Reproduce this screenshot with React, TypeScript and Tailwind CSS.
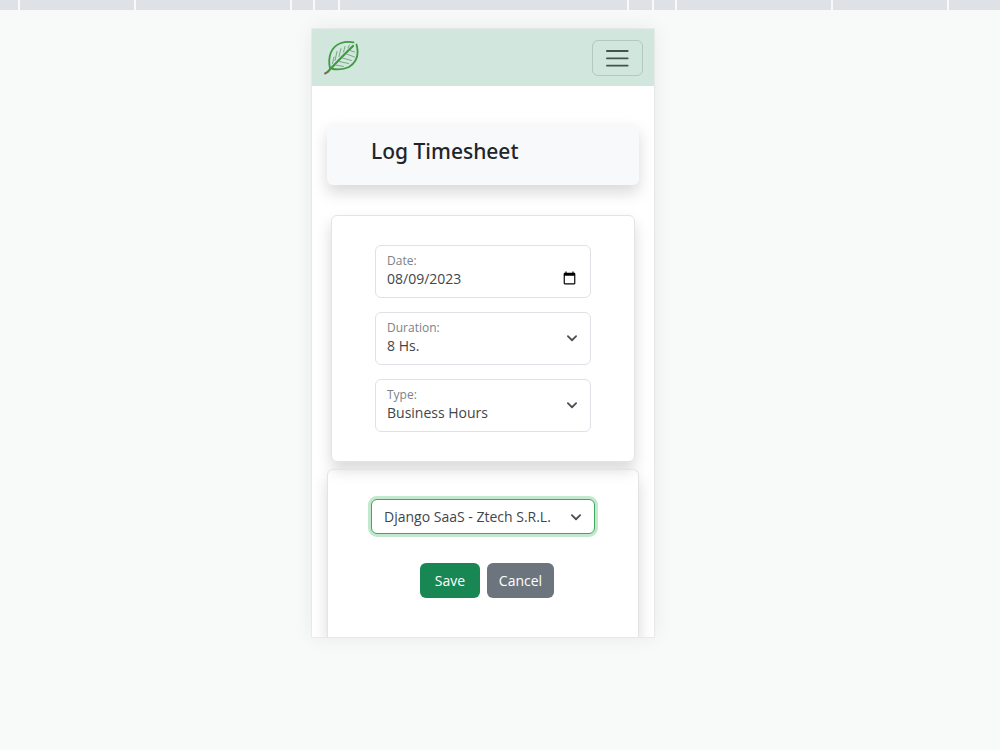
import { useState } from 'react';
import type { ReactNode } from 'react';
import { clsx } from 'clsx';

const DURATIONS = ['2 Hs.', '4 Hs.', '6 Hs.', '8 Hs.'];
const TYPES = ['Business Hours', 'Overtime', 'Holiday'];
const PROJECTS = ['Django SaaS - Ztech S.R.L.'];

function LeafLogo() {
  return (
    <svg viewBox="0 0 36 36" className="h-9 w-9" fill="none" strokeLinecap="round">
      <path d="M7 28.500C4.500 17 8 6.500 18 3c4.500-1.300 9-1.200 12.500-.6" stroke="#3f9a41" strokeWidth="1.800" />
      <path d="M33.500 4.500c2.500 9 .5 17.500-7.500 22.500-5 2.500-10.500 2.800-16.500 2" stroke="#3f9a41" strokeWidth="1.800" />
      <path d="M5.500 31C13 23 21 14.500 30 6" stroke="#3f9a41" strokeWidth="2.300" />
      <path
        d="M11 17 9.500 23.500M14 11.500 12 20.500M18 8.500 16 16.500M22 6.500 20.500 12M26.500 5 25 8"
        stroke="#78a883"
        strokeWidth="1"
      />
      <path
        d="M27 10.500 31.500 12M23.500 14 31.500 17M19.500 18 28.500 20.500M16 21.500 25.500 23.500M12.500 25 20.500 26.500"
        stroke="#78a883"
        strokeWidth="1"
      />
      <path d="M2.200 33.400 4.800 31.900" stroke="#84624f" strokeWidth="2.200" />
    </svg>
  );
}

function Chevron({ className }: { className?: string }) {
  return (
    <svg
      viewBox="0 0 16 16"
      className={clsx('pointer-events-none absolute h-3 w-3', className)}
      fill="none"
      stroke="#4b5055"
      strokeWidth="2.400"
      strokeLinecap="round"
      strokeLinejoin="round"
    >
      <path d="m2.500 5.500 5.500 5.500 5.500-5.500" />
    </svg>
  );
}

// Thin strip of breakpoint marks above the device
function BreakpointRuler() {
  const mark = 'shrink-0 border-l-2 border-[#f8faf9]';
  return (
    <div className="flex h-[10px] justify-center overflow-hidden bg-[#dee1e5] pr-[34px]">
      <div className={clsx(mark, 'w-[116px]')} />
      <div className={clsx(mark, 'w-[156px]')} />
      <div className={clsx(mark, 'w-[23px]')} />
      <div className={clsx(mark, 'w-[25px]')} />
      <div className={clsx(mark, 'w-[289px]')} />
      <div className={clsx(mark, 'w-[25px]')} />
      <div className={clsx(mark, 'w-[23px]')} />
      <div className={clsx(mark, 'w-[156px]')} />
      <div className={clsx(mark, 'w-[118px] border-r-2')} />
    </div>
  );
}

interface FieldProps {
  id: string;
  label: string;
  children: ReactNode;
}

function Field({ id, label, children }: FieldProps) {
  return (
    <div className="relative h-[53px]">
      {children}
      <label htmlFor={id} className="pointer-events-none absolute top-2 left-3 text-xs leading-4 text-[#7c8286]">
        {label}
      </label>
    </div>
  );
}

const control =
  'block h-full w-full appearance-none rounded-md border border-[#dee2e6] bg-white px-[11px] pt-[18px] pb-1 text-sm leading-5 text-[#41464b] outline-none';

interface SelectFieldProps {
  id: string;
  label: string;
  options: string[];
  value: string;
  onChange: (value: string) => void;
}

function SelectField({ id, label, options, value, onChange }: SelectFieldProps) {
  return (
    <Field id={id} label={label}>
      <select id={id} value={value} onChange={(e) => onChange(e.target.value)} className={control}>
        {options.map((option) => (
          <option key={option}>{option}</option>
        ))}
      </select>
      <Chevron className="top-5 right-[13px]" />
    </Field>
  );
}

export default function App() {
  const [date, setDate] = useState('2023-08-09');
  const [duration, setDuration] = useState('8 Hs.');
  const [type, setType] = useState('Business Hours');
  const [project, setProject] = useState(PROJECTS[0]);

  return (
    <div className="min-h-screen bg-[#f8faf9] font-['Open_Sans','Noto_Sans',sans-serif] text-[#212529]">
      <BreakpointRuler />

      <div className="flex justify-center pt-[19px] pr-[34px]">
        <main className="w-full max-w-[342px] overflow-hidden bg-white shadow-[0_0_20px_rgba(0,0,0,0.07),0_0_0_1px_rgba(0,0,0,0.04)]">
          <nav className="flex h-[57px] items-center justify-between bg-[#d1e7dd] px-[11px]">
            <a href="#" aria-label="Home">
              <LeafLogo />
            </a>
            <button
              type="button"
              aria-label="Toggle navigation"
              className="flex h-9 w-[51px] items-center justify-center rounded-md border border-[#b3c9bf]"
            >
              <svg viewBox="0 0 24 18" className="h-[18px] w-6" stroke="#46504c" strokeWidth="1.800" strokeLinecap="round">
                <path d="M.9 2h20.800M.9 9.300h20.800M.9 16.600h20.800" />
              </svg>
            </button>
          </nav>

          <form className="px-[15px] pt-[37px]" onSubmit={(e) => e.preventDefault()}>
            <header className="rounded-md bg-[#f8f9fb] px-11 pt-3 pb-[18px] shadow-[0_8px_15px_rgba(0,0,0,0.15)]">
              <h1 className="font-['Noto_Sans','Open_Sans',sans-serif] text-[21px] leading-8 font-medium">
                Log Timesheet
              </h1>
            </header>

            <section className="mx-1 mt-[30px] flex flex-col gap-[14px] rounded-md border border-[#e2e4e6] bg-white px-[43px] py-[29px] shadow-[0_8px_15px_rgba(0,0,0,0.15)]">
              <Field id="date" label="Date:">
                <input
                  id="date"
                  type="date"
                  value={date}
                  onChange={(e) => setDate(e.target.value)}
                  className={clsx(
                    control,
                    '[&::-webkit-calendar-picker-indicator]:text-[15px]',
                    '[&::-webkit-datetime-edit-day-field]:p-0 [&::-webkit-datetime-edit-month-field]:p-0 [&::-webkit-datetime-edit-year-field]:p-0'
                  )}
                />
              </Field>
              <SelectField
                id="duration"
                label="Duration:"
                options={DURATIONS}
                value={duration}
                onChange={setDuration}
              />
              <SelectField id="type" label="Type:" options={TYPES} value={type} onChange={setType} />
            </section>

            <section className="mt-[7px] rounded-t-md border border-b-0 border-[#e2e4e6] px-[43px] pt-[29px] pb-[39px] shadow-[0_8px_15px_rgba(0,0,0,0.15)]">
              <div className="relative">
                <select
                  aria-label="Project"
                  value={project}
                  onChange={(e) => setProject(e.target.value)}
                  className="block h-[35px] w-full appearance-none rounded-md border border-[#3fa85c] bg-white px-3 text-sm text-[#41464b] ring-3 ring-[#c3e8cd] outline-none"
                >
                  {PROJECTS.map((name) => (
                    <option key={name}>{name}</option>
                  ))}
                </select>
                <Chevron className="top-3 right-[13px]" />
              </div>

              <div className="mt-[29px] flex justify-center gap-[7px] pl-2">
                <button type="submit" className="h-[35px] w-[60px] rounded-md bg-[#198754] text-sm text-white">
                  Save
                </button>
                <button type="button" className="h-[35px] w-[67px] rounded-md bg-[#6c757d] text-sm text-white">
                  Cancel
                </button>
              </div>
            </section>
          </form>
        </main>
      </div>
    </div>
  );
}
